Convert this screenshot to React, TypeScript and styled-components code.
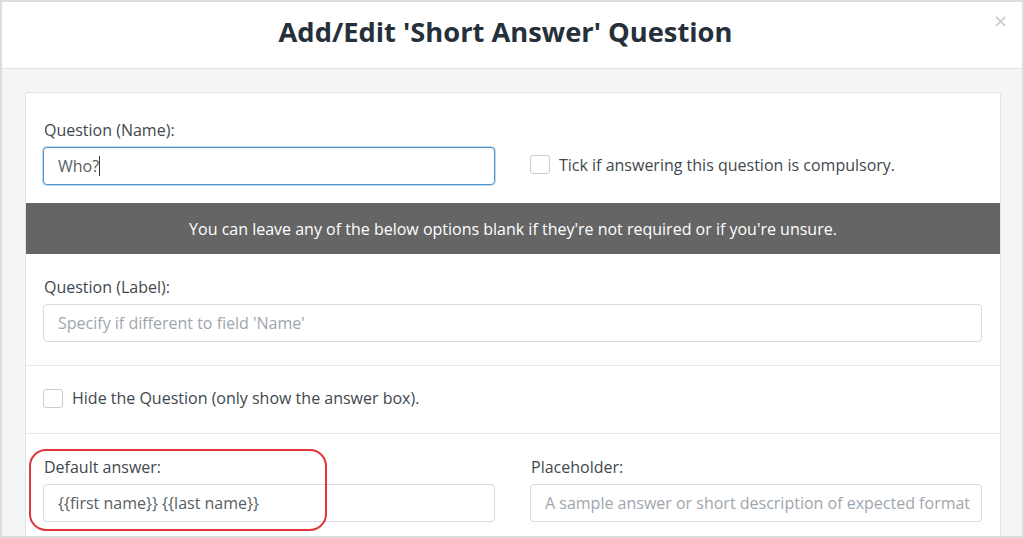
import React from "react";
import styled, { createGlobalStyle } from "styled-components";

const Global = createGlobalStyle`
  html, body { margin: 0; padding: 0; }
  body { font-family: "Open Sans", "Noto Sans", sans-serif; overflow: hidden; background: #fff; }
  * { box-sizing: border-box; }
`;

const Frame = styled.div`
  width: 1024px;
  height: 538px;
  border: 2px solid #dcdcdc;
  overflow: hidden;
  display: flex;
  flex-direction: column;
  background: #fff;
`;

const Header = styled.header`
  position: relative;
  height: 67px;
  flex: none;
  display: flex;
  align-items: center;
  justify-content: center;
  padding: 0 13px 5px 0;
  border-bottom: 1px solid #dfe4e6;
  background: #fff;
`;

const Title = styled.h1`
  margin: 0;
  font-size: 27.3px;
  font-weight: 700;
  color: #25303b;
  line-height: 1.2;
`;

const Close = styled.span`
  position: absolute;
  right: 14px;
  top: 10px;
  font-size: 18px;
  line-height: 1;
  color: #cbcbcb;
  font-family: "DejaVu Sans", sans-serif;
`;

const Body = styled.main`
  flex: 1;
  background: #f4f6f6;
  padding: 23px 21px 0 23px;
`;

const Card = styled.section`
  background: #fff;
  border: 1px solid #dfe4e6;
  border-bottom: none;
  border-radius: 3px 3px 0 0;
`;

const Row = styled.div<{ $pt: number; $pb: number; $divider?: boolean }>`
  display: grid;
  grid-template-columns: 452px 452px;
  column-gap: 35px;
  align-items: end;
  padding: ${(p) => p.$pt}px 18px ${(p) => p.$pb}px 17px;
  border-bottom: ${(p) => (p.$divider ? "1px solid #e6e9eb" : "none")};
`;

const FullRow = styled.div<{ $pt: number; $pb: number; $divider?: boolean }>`
  padding: ${(p) => p.$pt}px 18px ${(p) => p.$pb}px 17px;
  border-bottom: ${(p) => (p.$divider ? "1px solid #e6e9eb" : "none")};
`;

const Field = styled.div`
  position: relative;
  display: flex;
  flex-direction: column;
`;

const CheckCell = styled.div`
  height: 38px;
  display: flex;
  align-items: center;
  padding-bottom: 3px;
`;

const Label = styled.label`
  font-size: 16px;
  line-height: 22px;
  color: #41484e;
  margin-bottom: 6px;
  padding-left: 1px;
`;

const Input = styled.div<{ $focus?: boolean; $placeholder?: boolean }>`
  height: 38px;
  display: flex;
  align-items: center;
  padding: 0 14px;
  border: 1px solid ${(p) => (p.$focus ? "#4f94cc" : "#d5dadd")};
  box-shadow: ${(p) => (p.$focus ? "0 0 0 1px rgba(79,148,204,0.35)" : "none")};
  border-radius: 4px;
  font-size: 16px;
  color: ${(p) => (p.$placeholder ? "#9ea6ae" : "#585e63")};
  background: #fff;
  white-space: nowrap;
  overflow: hidden;
`;

const Caret = styled.span`
  display: inline-block;
  width: 1px;
  height: 20px;
  background: #333;
`;

const CheckLine = styled.div`
  display: flex;
  align-items: center;
  gap: 9px;
  font-size: 16px;
  line-height: 22px;
  color: #41484e;
`;

const Box = styled.span`
  width: 20px;
  height: 19px;
  border: 1px solid #c9cdd0;
  border-radius: 3px;
  background: #fff;
  flex: none;
`;

const Banner = styled.div`
  height: 51px;
  background: #656565;
  color: #fff;
  font-size: 16px;
  display: flex;
  align-items: center;
  justify-content: center;
`;

const Highlight = styled.div`
  position: absolute;
  left: -14px;
  top: -7px;
  width: 298px;
  height: 82px;
  border: 2px solid #e0373c;
  border-radius: 17px;
  pointer-events: none;
`;

export default function App() {
  return (
    <>
      <Global />
      <Frame>
        <Header>
          <Title>Add/Edit 'Short Answer' Question</Title>
          <Close>×</Close>
        </Header>
        <Body>
          <Card>
            <Row $pt={26} $pb={18}>
              <Field>
                <Label>Question (Name):</Label>
                <Input $focus>
                  Who?<Caret />
                </Input>
              </Field>
              <CheckCell>
                <CheckLine>
                  <Box />
                  Tick if answering this question is compulsory.
                </CheckLine>
              </CheckCell>
            </Row>
            <Banner>
              You can leave any of the below options blank if they're not required or if you're unsure.
            </Banner>
            <FullRow $pt={22} $pb={23} $divider>
              <Field>
                <Label>Question (Label):</Label>
                <Input $placeholder>Specify if different to field 'Name'</Input>
              </Field>
            </FullRow>
            <FullRow $pt={21} $pb={24} $divider>
              <CheckLine>
                <Box />
                Hide the Question (only show the answer box).
              </CheckLine>
            </FullRow>
            <Row $pt={22} $pb={20}>
              <Field>
                <Highlight />
                <Label>Default answer:</Label>
                <Input>{"{{first name}} {{last name}}"}</Input>
              </Field>
              <Field>
                <Label>Placeholder:</Label>
                <Input $placeholder>A sample answer or short description of expected format</Input>
              </Field>
            </Row>
          </Card>
        </Body>
      </Frame>
    </>
  );
}
